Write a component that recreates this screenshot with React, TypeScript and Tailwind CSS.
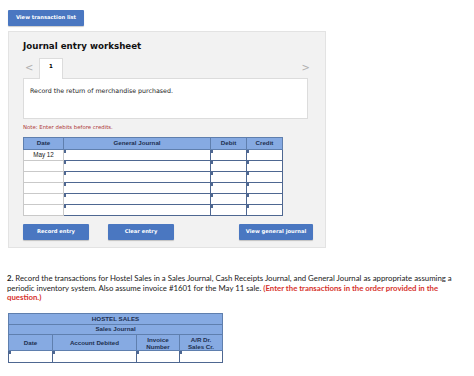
import React from 'react';

const verdana = { fontFamily: '"DejaVu Sans", Verdana, sans-serif' };
const arial = { fontFamily: '"Liberation Sans", Arial, sans-serif' };
const lato = { fontFamily: 'Lato, "Open Sans", sans-serif' };

function InputCell({ className = '' }: { className?: string }) {
  return (
    <td className={`relative border border-[#4e6791] bg-white p-0 ${className}`}>
      <span className="absolute left-0 top-0 h-[3px] w-[2px] bg-[#4e6791]" />
    </td>
  );
}

function BlueButton({ label, width }: { label: string; width: string }) {
  return (
    <button
      className={`${width} block h-[16px] shrink-0 whitespace-nowrap rounded-[1px] bg-[#4a77c1] text-[5.2px] font-bold leading-none text-white shadow-[0_1px_1px_rgba(0,0,0,0.2)]`}
      style={verdana}
    >
      {label}
    </button>
  );
}

export default function App() {
  const rows = [0, 1, 2, 3, 4, 5];

  return (
    <div className="h-[376px] w-[474px] overflow-hidden bg-white pl-[8px] pt-[10px] leading-none">
      <BlueButton label="View transaction list" width="w-[76px]" />

      <div className="mt-[5px] h-[217px] w-[318px] border border-[#e3e3e3] bg-[#f2f2f2] px-[14px] pt-[8px]">
        <h1 className="text-[8.7px] font-bold leading-[12px] text-[#111]" style={verdana}>
          Journal entry worksheet
        </h1>

        <div className="mt-[5px] flex h-[21px] items-end">
          <span className="mb-[5px] ml-[2px] w-[14px] text-[10px] leading-none text-[#b0b0b0]" style={verdana}>
            &lt;
          </span>
          <div
            className="relative z-10 -mb-px flex h-[21px] w-[24px] items-start justify-center border border-b-0 border-[#dcdcdc] bg-white pt-[5px] text-[5.5px] font-bold"
            style={verdana}
          >
            1
          </div>
          <span className="mb-[5px] ml-auto mr-[1px] text-[10px] leading-none text-[#b0b0b0]" style={verdana}>
            &gt;
          </span>
        </div>

        <div className="h-[41px] w-[285px] border border-[#dcdcdc] bg-white px-[6px] pt-[8px]">
          <p className="text-[6.3px] leading-[8px] text-[#222]" style={verdana}>
            Record the return of merchandise purchased.
          </p>
        </div>

        <p className="mt-[4px] text-[5.4px] leading-[8px] text-[#b0403c]" style={verdana}>
          Note: Enter debits before credits.
        </p>

        <table className="mt-[6px] w-[259px] table-fixed border-collapse text-[6.2px] leading-none" style={arial}>
          <colgroup>
            <col className="w-[40px]" />
            <col className="w-[147px]" />
            <col className="w-[36px]" />
            <col className="w-[36px]" />
          </colgroup>
          <thead>
            <tr className="h-[12px] bg-[#86aae2] font-bold text-[#1d2f4f]">
              <th className="border border-[#5f7fae]">Date</th>
              <th className="border border-[#5f7fae]">General Journal</th>
              <th className="border border-[#5f7fae]">Debit</th>
              <th className="border border-[#5f7fae]">Credit</th>
            </tr>
          </thead>
          <tbody>
            {rows.map((r) => (
              <tr key={r} className="h-[11px]">
                <td className="border border-[#c9c9c9] bg-white text-center text-[6.3px] text-[#222]">
                  {r === 0 ? 'May 12' : ''}
                </td>
                <InputCell />
                <InputCell />
                <InputCell />
              </tr>
            ))}
          </tbody>
        </table>

        <div className="mt-[8px] flex w-[290px] items-start">
          <BlueButton label="Record entry" width="w-[66px]" />
          <div className="ml-[19px]">
            <BlueButton label="Clear entry" width="w-[66px]" />
          </div>
          <div className="ml-auto">
            <BlueButton label="View general journal" width="w-[74px]" />
          </div>
        </div>
      </div>

      <p className="-ml-px mt-[26px] w-[452px] text-[7.8px] leading-[9.5px] text-[#222]" style={lato}>
        <span className="font-bold">2.</span> Record the transactions for Hostel Sales in a Sales Journal, Cash
        Receipts Journal, and General Journal as appropriate assuming a periodic inventory system. Also assume
        invoice #1601 for the May 11 sale.{' '}
        <span className="font-bold text-[#d6322d]">(Enter the transactions in the order provided in the question.)</span>
      </p>

      <table className="mt-[10.5px] w-[214px] table-fixed border-collapse text-[6.2px]" style={arial}>
        <colgroup>
          <col className="w-[44px]" />
          <col className="w-[84px]" />
          <col className="w-[43px]" />
          <col className="w-[43px]" />
        </colgroup>
        <thead className="font-bold text-[#1d2f4f]">
          <tr className="h-[11px] bg-[#86aae2]">
            <th colSpan={4} className="border border-[#5f7fae]">HOSTEL SALES</th>
          </tr>
          <tr className="h-[10px] bg-[#86aae2]">
            <th colSpan={4} className="border border-[#5f7fae]">Sales Journal</th>
          </tr>
          <tr className="h-[16px] bg-[#86aae2] leading-[7px]">
            <th className="border border-[#5f7fae]">Date</th>
            <th className="border border-[#5f7fae]">Account Debited</th>
            <th className="border border-[#5f7fae]">
              Invoice
              <br />
              Number
            </th>
            <th className="border border-[#5f7fae]">
              A/R Dr.
              <br />
              Sales Cr.
            </th>
          </tr>
        </thead>
        <tbody>
          <tr className="h-[12px]">
            <InputCell />
            <InputCell />
            <InputCell />
            <InputCell />
          </tr>
        </tbody>
      </table>
    </div>
  );
}
